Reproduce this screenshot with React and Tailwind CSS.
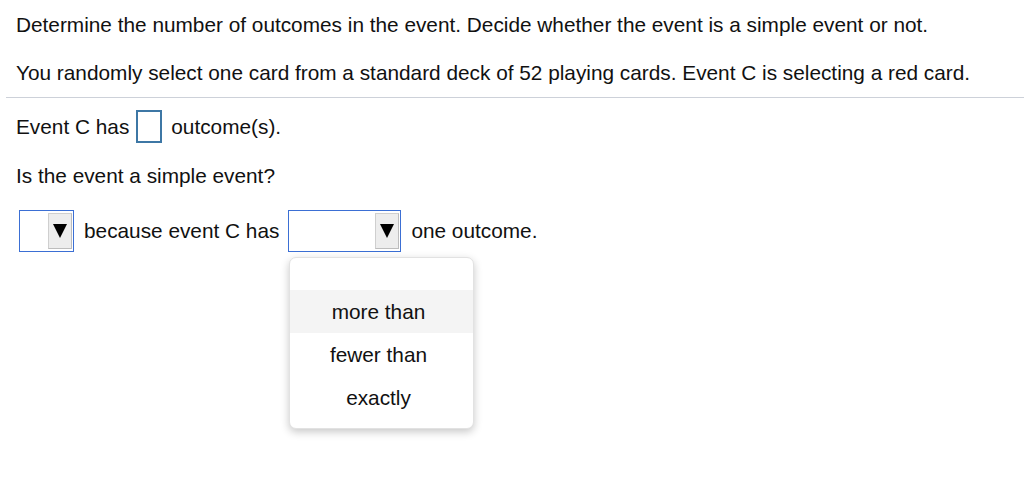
import React from 'react'

function Select({ width }) {
  return (
    <div className={`flex items-center justify-end h-[42px] border border-[#3b6fd4] bg-white pr-[1px] ${width}`}>
      <div className="flex items-center justify-center w-[24px] h-[36px] bg-[#ededed] border border-[#cfcfcf] border-r-[#bdbdbd] border-b-[#bdbdbd]">
        <svg width="16" height="16" viewBox="0 0 16 16">
          <polygon points="1,1 15,1 8,15" fill="#000" />
        </svg>
      </div>
    </div>
  )
}

export default function App() {
  return (
    <div className="relative min-h-[494px] bg-white text-[20.8px] text-[#111] font-['Liberation_Sans',Arial,sans-serif]">
      <div className="px-4 pt-[12px]">
        <p className="leading-[26px]">Determine the number of outcomes in the event. Decide whether the event is a simple event or not.</p>
        <p className="leading-[26px] mt-[22px]">You randomly select one card from a standard deck of 52 playing cards. Event C is selecting a red card.</p>
      </div>
      <div className="ml-[6px] mt-[11px] border-t border-[#cdd1d9]"></div>

      <div className="px-4">
        <div className="flex items-center mt-[12px] h-[33px]">
          <span>Event C has</span>
          <span className="inline-block w-[26px] h-[33px] ml-[7px] mr-[9px] border-2 border-[#3d77a5]"></span>
          <span>outcome(s).</span>
        </div>

        <p className="mt-[20px] leading-[26px]">Is the event a simple event?</p>

        <div className="flex items-center mt-[21px] ml-[3px]">
          <Select width="w-[55px]" />
          <span className="ml-[10px]">because event C has</span>
          <div className="ml-[9px]">
            <Select width="w-[113px]" />
          </div>
          <span className="ml-[10px]">one outcome.</span>
        </div>
      </div>

      <div className="absolute left-[289px] top-[257px] w-[185px] h-[172px] rounded-[7px] bg-white border border-[#e2e2e2] shadow-[0_3px_8px_rgba(0,0,0,0.22)] overflow-hidden">
        <div className="h-[32px]"></div>
        <div className="h-[43px] flex items-center justify-center pr-[6px] bg-[#f4f4f4]">more than</div>
        <div className="h-[43px] flex items-center justify-center pr-[6px]">fewer than</div>
        <div className="h-[43px] flex items-center justify-center pr-[6px]">exactly</div>
      </div>
    </div>
  )
}
